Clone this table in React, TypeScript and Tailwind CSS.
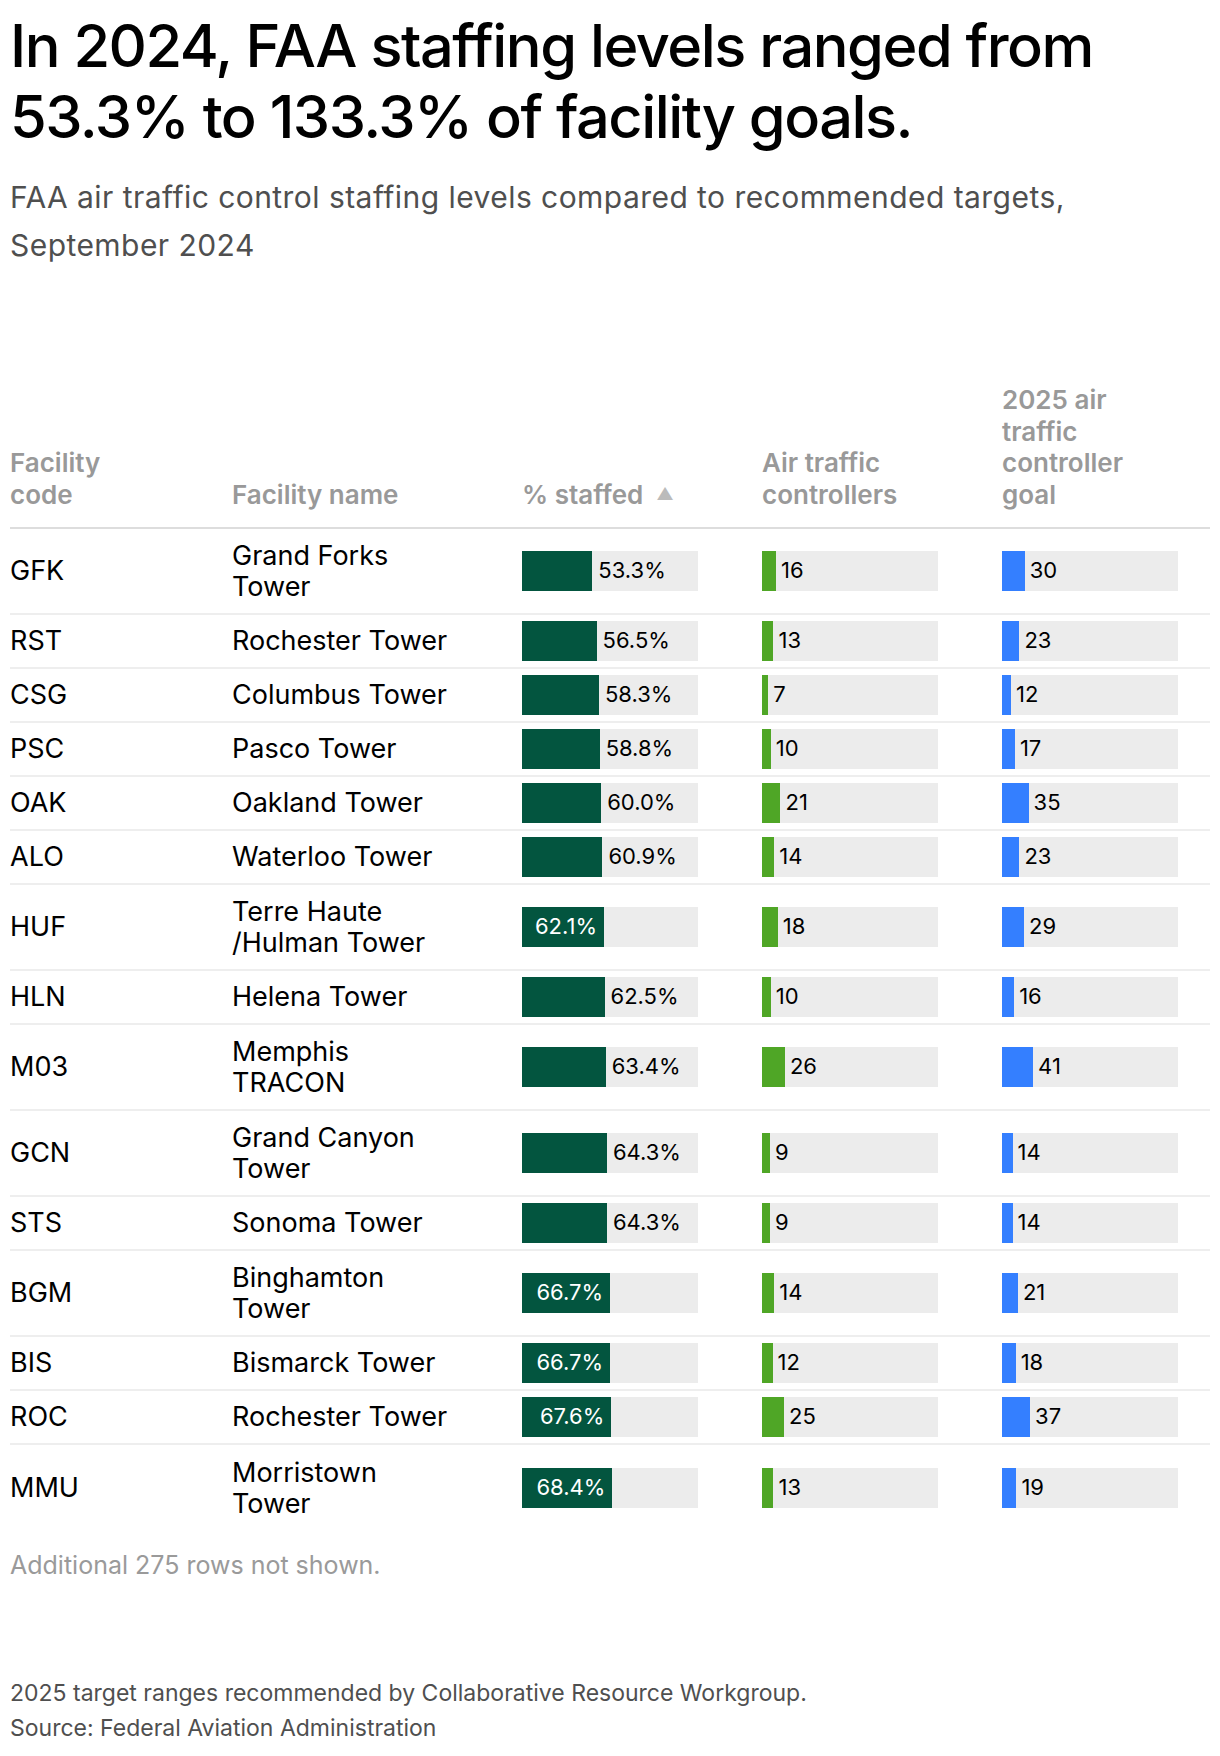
import React from "react";

type Row = {
  code: string;
  name: string[];
  pct: number;
  inside?: boolean;
  atc: number;
  goal: number;
};

const rows: Row[] = [
  { code: "GFK", name: ["Grand Forks", "Tower"], pct: 53.3, atc: 16, goal: 30 },
  { code: "RST", name: ["Rochester Tower"], pct: 56.5, atc: 13, goal: 23 },
  { code: "CSG", name: ["Columbus Tower"], pct: 58.3, atc: 7, goal: 12 },
  { code: "PSC", name: ["Pasco Tower"], pct: 58.8, atc: 10, goal: 17 },
  { code: "OAK", name: ["Oakland Tower"], pct: 60.0, atc: 21, goal: 35 },
  { code: "ALO", name: ["Waterloo Tower"], pct: 60.9, atc: 14, goal: 23 },
  { code: "HUF", name: ["Terre Haute", "/Hulman Tower"], pct: 62.1, inside: true, atc: 18, goal: 29 },
  { code: "HLN", name: ["Helena Tower"], pct: 62.5, atc: 10, goal: 16 },
  { code: "M03", name: ["Memphis", "TRACON"], pct: 63.4, atc: 26, goal: 41 },
  { code: "GCN", name: ["Grand Canyon", "Tower"], pct: 64.3, atc: 9, goal: 14 },
  { code: "STS", name: ["Sonoma Tower"], pct: 64.3, atc: 9, goal: 14 },
  { code: "BGM", name: ["Binghamton", "Tower"], pct: 66.7, inside: true, atc: 14, goal: 21 },
  { code: "BIS", name: ["Bismarck Tower"], pct: 66.7, inside: true, atc: 12, goal: 18 },
  { code: "ROC", name: ["Rochester Tower"], pct: 67.6, inside: true, atc: 25, goal: 37 },
  { code: "MMU", name: ["Morristown", "Tower"], pct: 68.4, inside: true, atc: 13, goal: 19 },
];

const BAR_W = 176;

function PctBar({ value, inside }: { value: number; inside?: boolean }) {
  const w = (value / 133.3) * BAR_W;
  return (
    <div className="flex h-[40px] w-[176px] bg-[#ececec] text-[22px]">
      <div
        className="flex h-full shrink-0 items-center justify-end bg-[#03553f] pr-[7px]"
        style={{ width: w }}
      >
        {inside && <span className="text-white">{value.toFixed(1)}%</span>}
      </div>
      {!inside && <span className="flex items-center pl-[6px]">{value.toFixed(1)}%</span>}
    </div>
  );
}

function CountBar({ value, max, color }: { value: number; max: number; color: string }) {
  const w = (value / max) * BAR_W;
  return (
    <div className="flex h-[40px] w-[176px] items-center bg-[#ececec] text-[22px]">
      <div className={`h-full shrink-0 ${color}`} style={{ width: w }} />
      <span className="pl-[5px]">{value}</span>
    </div>
  );
}

export default function App() {
  return (
    <div className="w-[1220px] bg-white px-[10px] text-black font-['Inter',sans-serif]">
      {/* Headline */}
      <h1 className="pt-[10px] text-[59.5px] font-medium leading-[71px] tracking-[-0.025em]">
        In 2024, FAA staffing levels ranged from
        <br />
        53.3% to 133.3% of facility goals.
      </h1>
      <p className="mt-[21px] text-[30px] leading-[48px] tracking-[0.015em] text-[#4f4f4f]">
        FAA air traffic control staffing levels compared to recommended targets,
        <br />
        September 2024
      </p>

      {/* Table */}
      <div className="mt-[115px] text-[27px] leading-[31.5px]">
        <div className="flex items-end border-b-2 border-[#dddddd] pb-[17px] text-[26px] font-semibold text-[#999999]">
          <div className="w-[222px]">
            Facility
            <br />
            code
          </div>
          <div className="w-[290px]">Facility name</div>
          <div className="flex w-[240px] items-center gap-[13px]">
            % staffed
            <span className="text-[17px] text-[#bbbbbb]">▲</span>
          </div>
          <div className="w-[240px]">
            Air traffic
            <br />
            controllers
          </div>
          <div className="w-[208px]">
            2025 air
            <br />
            traffic
            <br />
            controller
            <br />
            goal
          </div>
        </div>

        {rows.map((r, i) => (
          <div
            key={r.code + i}
            className={`flex items-center ${r.name.length > 1 ? "h-[86px]" : "h-[54px]"} ${
              i < rows.length - 1 ? "border-b-2 border-[#eeeeee]" : ""
            }`}
          >
            <div className="w-[222px]">{r.code}</div>
            <div className="w-[290px]">
              {r.name.map((l) => (
                <div key={l}>{l}</div>
              ))}
            </div>
            <div className="w-[240px]">
              <PctBar value={r.pct} inside={r.inside} />
            </div>
            <div className="w-[240px]">
              <CountBar value={r.atc} max={200} color="bg-[#4fa626]" />
            </div>
            <div className="w-[208px]">
              <CountBar value={r.goal} max={232} color="bg-[#347fff]" />
            </div>
          </div>
        ))}
      </div>

      <p className="mt-[19px] text-[25px] leading-[30px] text-[#9a9a9a]">Additional 275 rows not shown.</p>

      {/* Notes */}
      <div className="mt-[96px] pb-[12px] text-[23px] leading-[35px] text-[#4f4f4f]">
        <p>2025 target ranges recommended by Collaborative Resource Workgroup.</p>
        <p>Source: Federal Aviation Administration</p>
      </div>
    </div>
  );
}
